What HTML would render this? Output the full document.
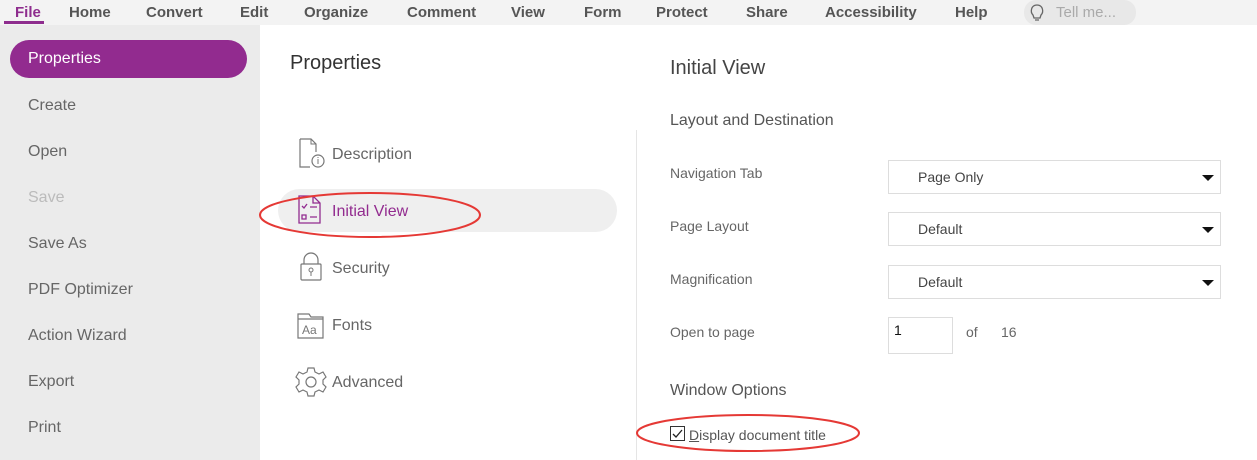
<!DOCTYPE html>
<html><head><style>
*{margin:0;padding:0;box-sizing:border-box}
body{width:1257px;height:460px;overflow:hidden;background:#fff;font-family:"Liberation Sans",sans-serif;position:relative;color:#555}
.a{position:absolute;white-space:nowrap}
.menu{position:absolute;left:0;top:0;width:1257px;height:25px;background:#f3f3f3}
.menu span{position:absolute;top:4px;font-weight:bold;font-size:15px;color:#555}
.side{position:absolute;left:0;top:25px;width:260px;height:435px;background:#ebebeb}
.side .i{position:absolute;left:28px;font-size:16px;color:#666}
.mid{font-size:16px;color:#666}
.lbl{font-size:14px;color:#666}
.dd{position:absolute;left:888px;width:333px;height:34px;border:1px solid #ddd;background:#fff;font-size:14px;color:#444;padding:8px 0 0 29px}
.dd:after{content:"";position:absolute;right:6px;top:14px;border-left:6px solid transparent;border-right:6px solid transparent;border-top:6px solid #111}
</style></head><body>
<div class="menu">
<span style="left:15px;color:#8e2d8e">File</span>
<div class="a" style="left:4px;top:21px;width:40px;height:3px;background:#8e2d8e"></div>
<span style="left:69px">Home</span><span style="left:146px">Convert</span><span style="left:240px">Edit</span><span style="left:304px">Organize</span><span style="left:407px">Comment</span><span style="left:511px">View</span><span style="left:584px">Form</span><span style="left:656px">Protect</span><span style="left:746px">Share</span><span style="left:825px">Accessibility</span><span style="left:955px">Help</span>
<div class="a" style="left:1024px;top:0;width:112px;height:25px;background:#e8e8e8;border-radius:12px"></div>
<svg class="a" style="left:1028px;top:2px" width="18" height="20" viewBox="0 0 18 20"><path d="M5 13 C2 10 3 3 9 3 C15 3 16 10 13 13 L12 16 H6 Z M7 18 H11" fill="none" stroke="#666" stroke-width="1.3"/></svg>
<span style="left:1056px;font-weight:normal;color:#aaa;font-size:15px">Tell me...</span>
</div>
<div class="side">
<div class="a" style="left:10px;top:15px;width:237px;height:38px;background:#922b8f;border-radius:19px"></div>
<div class="i" style="top:25px;color:#fff">Properties</div>
<div class="i" style="top:72px">Create</div>
<div class="i" style="top:118px">Open</div>
<div class="i" style="top:164px;color:#bbb">Save</div>
<div class="i" style="top:210px">Save As</div>
<div class="i" style="top:256px">PDF Optimizer</div>
<div class="i" style="top:302px">Action Wizard</div>
<div class="i" style="top:348px">Export</div>
<div class="i" style="top:394px">Print</div>
</div>
<div class="a" style="left:290px;top:52px;font-size:20px;color:#333">Properties</div>
<div class="a" style="left:278px;top:189px;width:339px;height:43px;background:#efefef;border-radius:22px"></div>
<svg class="a" style="left:296px;top:138px" width="30" height="32" viewBox="0 0 30 32"><path d="M4 1 H15 L20 6 V14 M20 1" fill="none" stroke="#777" stroke-width="1.2"/><path d="M14 29 H4 V1" fill="none" stroke="#777" stroke-width="1.2"/><path d="M15 1 V6 H20" fill="none" stroke="#777"/><circle cx="22" cy="23" r="6" fill="none" stroke="#777" stroke-width="1.2"/><path d="M22 21v5M22 19v1" stroke="#777"/></svg>
<div class="a mid" style="left:332px;top:146px">Description</div>
<svg class="a" style="left:298px;top:195px" width="24" height="30" viewBox="0 0 24 30"><path d="M1 1 H15 L22 8 V28 H1 Z M15 1 V8 H22" fill="none" stroke="#922b8f" stroke-width="1.3"/><path d="M4 11 l2 2 l3 -4 M12 12 H19 M4 20 H8 V24 H4 Z M12 22 H19" fill="none" stroke="#922b8f" stroke-width="1.3"/></svg>
<div class="a mid" style="left:332px;top:203px;color:#922b8f">Initial View</div>
<svg class="a" style="left:300px;top:252px" width="22" height="30" viewBox="0 0 22 30"><path d="M4 12 V8 A7 7 0 0 1 18 8 V12" fill="none" stroke="#777" stroke-width="1.2"/><rect x="1" y="12" width="20" height="16" rx="1" fill="none" stroke="#777" stroke-width="1.2"/><circle cx="11" cy="18" r="2" fill="none" stroke="#777"/><path d="M11 20v4" stroke="#777"/></svg>
<div class="a mid" style="left:332px;top:260px">Security</div>
<svg class="a" style="left:297px;top:311px" width="28" height="28" viewBox="0 0 28 28"><path d="M1 4 V27 H26 V6 H14 L12 3 H1 Z M1 8 H26" fill="none" stroke="#777" stroke-width="1.2"/><text x="5" y="23" font-size="12" font-family="Liberation Sans" fill="#777">Aa</text></svg>
<div class="a mid" style="left:332px;top:317px">Fonts</div>
<svg class="a" style="left:295px;top:366px" width="32" height="32" viewBox="0 0 32 32"><path d="M13 2 h6 l1 4 l4 2 l4 -2 l3 5 l-3 3 v4 l3 3 l-3 5 l-4 -2 l-4 2 l-1 4 h-6 l-1 -4 l-4 -2 l-4 2 l-3 -5 l3 -3 v-4 l-3 -3 l3 -5 l4 2 l4 -2 z" fill="none" stroke="#777" stroke-width="1.2"/><circle cx="16" cy="16" r="5" fill="none" stroke="#777" stroke-width="1.2"/></svg>
<div class="a mid" style="left:332px;top:374px">Advanced</div>
<div class="a" style="left:636px;top:130px;width:1px;height:330px;background:#e5e5e5"></div>
<div class="a" style="left:670px;top:57px;font-size:20px;color:#444">Initial View</div>
<div class="a" style="left:670px;top:112px;font-size:16px;color:#555">Layout and Destination</div>
<div class="a lbl" style="left:670px;top:165px">Navigation Tab</div>
<div class="a lbl" style="left:670px;top:218px">Page Layout</div>
<div class="a lbl" style="left:670px;top:271px">Magnification</div>
<div class="a lbl" style="left:670px;top:324px">Open to page</div>
<div class="dd" style="top:160px">Page Only</div>
<div class="dd" style="top:212px">Default</div>
<div class="dd" style="top:265px">Default</div>
<div class="a" style="left:888px;top:317px;width:65px;height:37px;border:1px solid #ddd;font-size:14px;color:#111;padding:4px 0 0 5px">1</div>
<div class="a lbl" style="left:966px;top:324px">of</div>
<div class="a lbl" style="left:1001px;top:324px">16</div>
<div class="a" style="left:670px;top:382px;font-size:16px;color:#555">Window Options</div>
<div class="a" style="left:670px;top:426px;width:15px;height:15px;border:1px solid #333;background:#fff"></div>
<svg class="a" style="left:671px;top:427px" width="13" height="13" viewBox="0 0 13 13"><path d="M2 7 L5 10 L11 3" fill="none" stroke="#222" stroke-width="1.3"/></svg>
<div class="a lbl" style="left:689px;top:427px;color:#555"><u>D</u>isplay document title</div>
<svg class="a" style="left:0;top:0" width="1257" height="460"><ellipse cx="370" cy="215" rx="110" ry="22" fill="none" stroke="#e53935" stroke-width="2"/><ellipse cx="748" cy="433" rx="111" ry="18" fill="none" stroke="#e53935" stroke-width="2"/></svg>
</body></html>
